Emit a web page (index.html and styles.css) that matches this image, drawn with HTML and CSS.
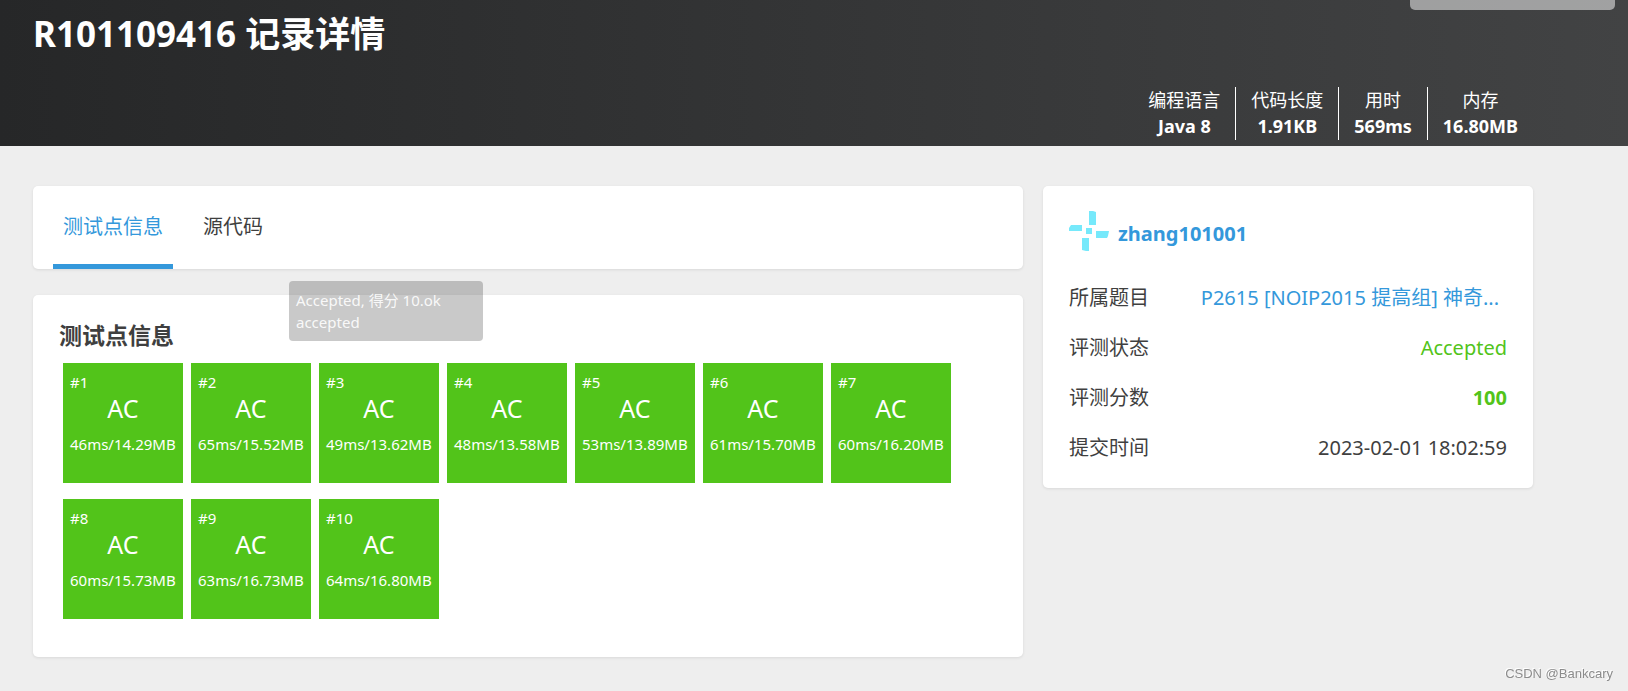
FILE: index.html
```html
<!DOCTYPE html>
<html lang="zh-CN">
  <head>
    <meta charset="UTF-8" />
    <meta name="viewport" content="width=device-width, initial-scale=1.0" />
    <title>R101109416 记录详情</title>
    <link rel="stylesheet" href="styles.css">
  </head>
  <body>
    <header class="header">
      <div class="user-nav"></div>
      <h1>R101109416 记录详情</h1>
      <div class="stats">
        <div class="stat"><span>编程语言</span><strong>Java 8</strong></div>
        <div class="stat"><span>代码长度</span><strong>1.91KB</strong></div>
        <div class="stat"><span>用时</span><strong>569ms</strong></div>
        <div class="stat"><span>内存</span><strong>16.80MB</strong></div>
      </div>
    </header>

    <main class="container">
      <section class="main">
        <nav class="card tabs">
          <a href="#info" class="tab active">测试点信息</a>
          <a href="#code" class="tab">源代码</a>
        </nav>
        <div class="card result" id="info">
          <div class="tooltip">Accepted, 得分 10.ok accepted</div>
          <h2>测试点信息</h2>
          <div class="cases">
            <div class="case"><span class="id">#1</span><span class="status">AC</span><span class="usage">46ms/14.29MB</span></div>
            <div class="case"><span class="id">#2</span><span class="status">AC</span><span class="usage">65ms/15.52MB</span></div>
            <div class="case"><span class="id">#3</span><span class="status">AC</span><span class="usage">49ms/13.62MB</span></div>
            <div class="case"><span class="id">#4</span><span class="status">AC</span><span class="usage">48ms/13.58MB</span></div>
            <div class="case"><span class="id">#5</span><span class="status">AC</span><span class="usage">53ms/13.89MB</span></div>
            <div class="case"><span class="id">#6</span><span class="status">AC</span><span class="usage">61ms/15.70MB</span></div>
            <div class="case"><span class="id">#7</span><span class="status">AC</span><span class="usage">60ms/16.20MB</span></div>
            <div class="case"><span class="id">#8</span><span class="status">AC</span><span class="usage">60ms/15.73MB</span></div>
            <div class="case"><span class="id">#9</span><span class="status">AC</span><span class="usage">63ms/16.73MB</span></div>
            <div class="case"><span class="id">#10</span><span class="status">AC</span><span class="usage">64ms/16.80MB</span></div>
          </div>
        </div>
      </section>

      <aside class="card side">
        <div class="user">
          <svg class="avatar" width="40" height="40" viewBox="0 0 40 40" fill="#76e9fb">
            <path d="M20 0h4l3 1v13h-7z" />
            <path d="M2 14h11v6H0v-3z" />
            <path d="M27 20h13l-1 5-1 2H27z" />
            <path d="M13 27h7v13h-3l-4-1z" />
            <path d="M17 17h6v6h-6z" />
          </svg>
          <a href="#user" class="username">zhang101001</a>
        </div>
        <dl class="info">
          <div class="row"><dt>所属题目</dt><dd><a href="#problem" class="problem">P2615 [NOIP2015 提高组] 神奇...</a></dd></div>
          <div class="row"><dt>评测状态</dt><dd class="green">Accepted</dd></div>
          <div class="row"><dt>评测分数</dt><dd class="green score">100</dd></div>
          <div class="row"><dt>提交时间</dt><dd>2023-02-01 18:02:59</dd></div>
        </dl>
      </aside>
    </main>

    <div class="watermark">CSDN @Bankcary</div>
  </body>
</html>
```
FILE: styles.css
```css
* {
  box-sizing: border-box;
}
body {
  font-family: "Noto Sans", "Noto Sans CJK SC", sans-serif;
  font-size: 20px;
  line-height: 30px;
  color: #3f3f3f;
  background-color: #eee;
  margin: 0;
}
a {
  color: #3498db;
  text-decoration: none;
}
h1,
h2,
dl,
dd {
  margin: 0;
}
.header {
  padding: 8px 95px 6px 33px;
  color: #fff;
  background: linear-gradient(to right, #262728, #424344);
}
.header h1 {
  font-size: 35px;
  line-height: 52px;
}
/* bottom edge of the floating user bar */
.user-nav {
  position: absolute;
  top: 0;
  right: 13px;
  width: 205px;
  height: 10px;
  border-radius: 0 0 5px 5px;
  background-color: rgba(255, 255, 255, 0.5);
}
.stats {
  display: flex;
  justify-content: flex-end;
  margin-top: 27px;
}
.stat {
  display: flex;
  flex-direction: column;
  padding: 0 15px;
  font-size: 18px;
  line-height: 26px;
  text-align: center;
  border-left: 1px solid #fff;
}
.stat:first-child {
  border-left: none;
}
.stat strong {
  line-height: 27px;
}
.container {
  display: grid;
  grid-template-columns: 99fr 49fr;
  align-items: start;
  gap: 20px;
  padding: 40px 95px 34px 33px;
}
.side {
  padding: 25px 26px;
}
.card {
  background-color: #fff;
  border-radius: 5px;
  box-shadow: 0 1px 3px rgba(26, 26, 26, 0.1);
}
.tabs {
  display: flex;
  gap: 20px;
  padding: 0 20px;
  margin-bottom: 26px;
}
.tab {
  padding: 26px 10px 22px;
  color: #3f3f3f;
  border-bottom: 5px solid transparent;
}
.tab.active {
  color: #3498db;
  border-color: #3498db;
}
.result {
  position: relative;
  padding: 24px 26px 38px;
}
.result h2 {
  font-size: 23px;
  line-height: 32px;
}
.cases {
  display: flex;
  flex-wrap: wrap;
  gap: 16px 8px;
  padding: 12px 4px 0;
}
.case {
  display: flex;
  flex-direction: column;
  width: 120px;
  height: 120px;
  padding: 8px 7px;
  color: #fff;
  font-size: 15px;
  line-height: 22px;
  background-color: #52c41a;
}
.case .status {
  font-size: 25px;
  line-height: 30px;
  text-align: center;
}
.case .usage {
  margin-top: 10px;
}
.tooltip {
  position: absolute;
  top: -14px;
  left: 256px;
  width: 194px;
  padding: 8px 7px;
  color: rgba(255, 255, 255, 0.9);
  font-size: 15px;
  line-height: 22px;
  border-radius: 4px;
  background-color: rgba(28, 28, 28, 0.24);
}
.user {
  display: flex;
  align-items: center;
  gap: 9px;
  margin-bottom: 32px;
}
.username {
  padding-top: 6px;
  font-weight: bold;
}
.info {
  display: flex;
  flex-direction: column;
  gap: 20px;
}
.row {
  display: flex;
  justify-content: space-between;
  white-space: nowrap;
}
.problem {
  padding-right: 8px;
}
.green {
  color: #52c41a;
}
.score {
  font-weight: bold;
}
.watermark {
  position: fixed;
  right: 15px;
  bottom: 7px;
  color: #8c8c8c;
  font-family: "Liberation Sans", Arial, sans-serif;
  font-size: 13px;
  line-height: 20px;
  text-shadow: -1px -1px 0 #fff;
}
```
